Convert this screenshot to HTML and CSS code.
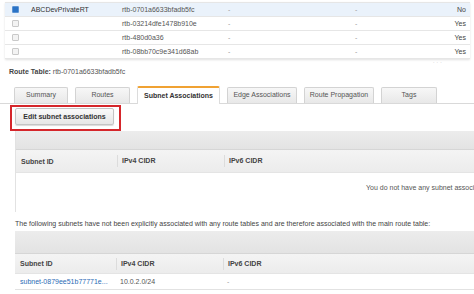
FILE: index.html
```html
<!DOCTYPE html>
<html lang="en">
<head>
    <meta charset="UTF-8">
    <meta name="viewport" content="width=device-width, initial-scale=1.0">
    <title>Route Tables</title>
    <link rel="stylesheet" href="styles.css">
</head>
<body>

    <div class="rt-list">
        <div class="rt-row selected">
            <span class="check on"></span>
            <span class="rt-name">ABCDevPrivateRT</span>
            <span class="rt-id">rtb-0701a6633bfadb5fc</span>
            <span class="dash">-</span>
            <span class="dash">-</span>
            <span class="main">No</span>
        </div>
        <div class="rt-row">
            <span class="check"></span>
            <span class="rt-name"></span>
            <span class="rt-id">rtb-03214dfe1478b910e</span>
            <span class="dash">-</span>
            <span class="dash">-</span>
            <span class="main">Yes</span>
        </div>
        <div class="rt-row">
            <span class="check"></span>
            <span class="rt-name"></span>
            <span class="rt-id">rtb-480d0a36</span>
            <span class="dash">-</span>
            <span class="dash">-</span>
            <span class="main">Yes</span>
        </div>
        <div class="rt-row">
            <span class="check"></span>
            <span class="rt-name"></span>
            <span class="rt-id">rtb-08bb70c9e341d68ab</span>
            <span class="dash">-</span>
            <span class="dash">-</span>
            <span class="main">Yes</span>
        </div>
    </div>
    <div class="resize-handle">&middot; &middot; &middot;</div>

    <div class="route-title"><b>Route Table:</b> rtb-0701a6633bfadb5fc</div>

    <div class="tabs">
        <div class="tab tab-summary">Summary</div>
        <div class="tab tab-routes">Routes</div>
        <div class="tab tab-subnets active">Subnet Associations</div>
        <div class="tab tab-edge">Edge Associations</div>
        <div class="tab tab-prop">Route Propagation</div>
        <div class="tab tab-tags">Tags</div>
    </div>

    <div class="highlight-box">
        <button class="edit-button">Edit subnet associations</button>
    </div>

    <div class="panel">
        <div class="panel-band"></div>
        <div class="cols panel-head">
            <div>Subnet ID</div>
            <div>IPv4 CIDR</div>
            <div>IPv6 CIDR</div>
        </div>
        <div class="panel-empty">You do not have any subnet associations.</div>
    </div>

    <p class="note">The following subnets have not been explicitly associated with any route tables and are therefore associated with the main route table:</p>

    <div class="panel panel-main">
        <div class="panel-band"></div>
        <div class="cols panel-head">
            <div>Subnet ID</div>
            <div>IPv4 CIDR</div>
            <div>IPv6 CIDR</div>
        </div>
        <div class="cols panel-row">
            <div><a href="#" class="subnet-link">subnet-0879ee51b77771e...</a></div>
            <div>10.0.2.0/24</div>
            <div class="dash">-</div>
        </div>
    </div>

</body>
</html>
```

FILE: styles.css
```css
body {
    font-family: "Liberation Sans", Arial, sans-serif;
    font-size: 7px;
    color: #444;
    margin: 0;
    padding: 0;
    background-color: #fff;
    overflow: hidden;
}
.rt-list {
    margin: 2px 4px 0 5px;
    border-top: 1px solid #e6e6e6;
    box-shadow: 0 1px 2px rgba(0,0,0,0.12);
}
.rt-row {
    display: grid;
    grid-template-columns: 26px 91px 103px 127px 1fr auto;
    align-items: center;
    height: 13px;
    border-bottom: 1px solid #e6e6e6;
}
.rt-row.selected {
    background: #eaf2fb;
}
.check {
    width: 5px;
    height: 5px;
    margin-left: 7px;
    border: 1px solid #c9c9c9;
    border-radius: 1px;
    background: #f3f3f3;
}
.check.on {
    background: #2a73c6;
    border-color: #5b93d3;
}
.rt-name {
    color: #333;
}
.rt-id {
    color: #555;
}
.dash {
    color: #999;
    padding-left: 3px;
}
.main {
    padding-right: 4px;
    color: #444;
}
.resize-handle {
    height: 6px;
    line-height: 6px;
    text-align: right;
    padding-right: 32px;
    color: #c4c4c4;
    font-size: 6px;
}
.route-title {
    margin: 2px 0 0 9px;
    line-height: 10px;
    color: #555;
}
.route-title b {
    color: #444;
}
.tabs {
    display: flex;
    align-items: flex-end;
    gap: 7px;
    margin-top: 9px;
    padding-left: 14px;
    border-bottom: 1px solid #d9d9d9;
}
.tab {
    box-sizing: border-box;
    height: 16px;
    line-height: 14px;
    text-align: center;
    color: #555;
    border: 1px solid #d3d3d3;
    border-bottom: none;
    border-radius: 2px 2px 0 0;
    background: linear-gradient(#f7f7f7, #e8e8e8);
}
.tab.active {
    height: 18px;
    margin-bottom: -1px;
    line-height: 15px;
    font-weight: bold;
    color: #333;
    background: #fff;
    border-color: #dcdcdc;
    border-top: 2px solid #f0a233;
}
.tab-summary { width: 54px; }
.tab-routes { width: 55px; }
.tab-subnets { width: 83px; }
.tab-edge { width: 70px; }
.tab-prop { width: 70px; }
.tab-tags { width: 56px; }
.highlight-box {
    display: inline-block;
    margin: 1px 0 0 10px;
    padding: 1px 5px 4px 3px;
    border: 2px solid #d5262b;
    vertical-align: top;
}
.edit-button {
    display: block;
    box-sizing: border-box;
    width: 99px;
    height: 17px;
    padding: 0;
    font-family: inherit;
    font-size: 7px;
    font-weight: bold;
    color: #333;
    border: 1px solid #c4c4c4;
    border-radius: 2px;
    background: linear-gradient(#fafafa, #e6e6e6);
    box-shadow: 0 1px 1px rgba(0,0,0,0.15);
}
.panel {
    margin-left: 15px;
    border-left: 1px solid #e2e2e2;
}
.panel-band {
    height: 18px;
    background: linear-gradient(#ececec, #e3e3e3);
}
.panel-main {
    margin-top: 2px;
    border-left: none;
    border-bottom: 1px solid #e2e2e2;
}
.panel-main .panel-band {
    height: 22px;
}
.cols {
    display: grid;
    grid-template-columns: 101px 107px 1fr;
    align-items: center;
}
.cols > div {
    padding-left: 5px;
}
.cols > div + div {
    padding-left: 4px;
}
.panel-head {
    box-sizing: border-box;
    height: 24px;
    font-weight: bold;
    color: #444;
    border-top: 1px solid #d6d6d6;
    border-bottom: 1px solid #e4e4e4;
    background: linear-gradient(#f4f4f4, #ececec);
}
.panel-head > div + div {
    border-left: 1px solid #dcdcdc;
    line-height: 12px;
}
.panel-main .panel-head {
    height: 21px;
}
.panel-empty {
    height: 39px;
    box-sizing: border-box;
    padding: 10px 0 0 350px;
    line-height: 10px;
    white-space: nowrap;
    color: #555;
}
.note {
    margin: 7px 0 0 15px;
    line-height: 10px;
    color: #444;
}
.panel-row {
    height: 15px;
    color: #555;
}
.subnet-link {
    color: #2b6cb5;
    text-decoration: none;
}
```
